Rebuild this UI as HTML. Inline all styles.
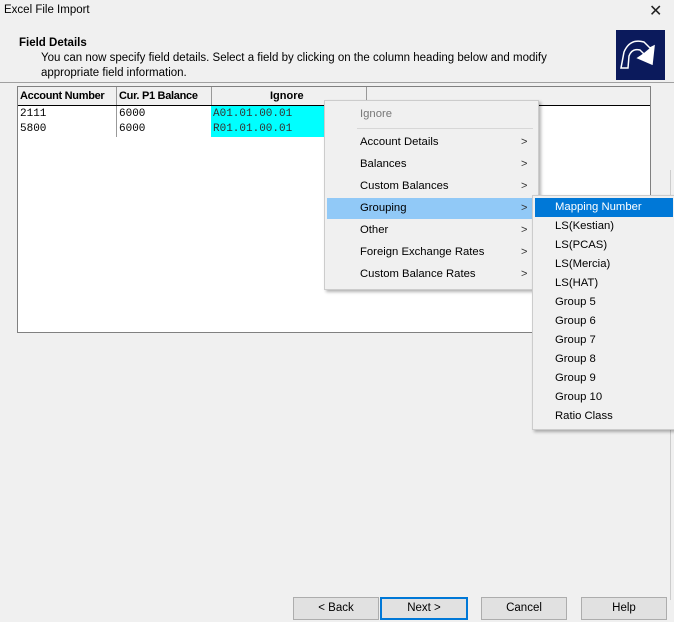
<!DOCTYPE html>
<html><head><style>
body{margin:0;width:674px;height:622px;background:#f0f0f0;font-family:"Liberation Sans",sans-serif;font-size:11.5px;color:#000;position:relative;overflow:hidden}
.a{position:absolute;white-space:nowrap}
.mono{font-family:"Liberation Mono",monospace;font-size:11px}
.mi{position:absolute;left:35px;font-size:11.3px}
.ar{position:absolute;left:196px;font-size:11px;color:#333}
.si{position:absolute;left:22px;font-size:11.3px}
.btn{position:absolute;top:597px;height:21px;border:1px solid #adadad;background:#e1e1e1;text-align:center;line-height:21px;font-size:11.5px}
</style></head><body>
<div class="a" style="left:4px;top:4px">Excel File Import</div>
<div class="a" style="left:649px;top:1px;font-size:16px;font-weight:300;color:#222">✕</div>
<div class="a" style="left:19px;top:37px;font-weight:bold">Field Details</div>
<div class="a" style="left:41px;top:52px">You can now specify field details. Select a field by clicking on the column heading below and modify</div>
<div class="a" style="left:41px;top:67px">appropriate field information.</div>
<div class="a" style="left:616px;top:30px;width:49px;height:50px;background:#0b1a5c">
<svg width="49" height="50" viewBox="0 0 49 50"><path d="M5 38 L8 22 Q14 8 28 12 L34 18 L38 16 L36 34 L22 28 L28 24 L24 20 Q16 18 13 26 L12 38 Z" fill="none" stroke="#fff" stroke-width="1.5"/><path d="M34 18 L38 16 L36 34 L22 28 Z" fill="#fff"/></svg></div>
<div class="a" style="left:0;top:82px;width:674px;height:1px;background:#a0a0a0"></div>
<div class="a" style="left:17px;top:86px;width:632px;height:245px;background:#fff;border:1px solid #808080"></div>
<div class="a" style="left:18px;top:87px;width:632px;height:18px;background:#f0f0f0;border-bottom:1px solid #000"></div>
<div class="a" style="left:116px;top:87px;width:1px;height:18px;background:#999"></div>
<div class="a" style="left:211px;top:87px;width:1px;height:18px;background:#999"></div>
<div class="a" style="left:366px;top:87px;width:1px;height:18px;background:#999"></div>
<div class="a" style="left:20px;top:90px;font-weight:bold;font-size:11px;letter-spacing:-0.3px">Account Number</div>
<div class="a" style="left:119px;top:90px;font-weight:bold;font-size:11px;letter-spacing:-0.3px">Cur. P1 Balance</div>
<div class="a" style="left:270px;top:90px;font-weight:bold;font-size:11px">Ignore</div>
<div class="a" style="left:116px;top:106px;width:1px;height:31px;background:#999"></div>
<div class="a" style="left:211px;top:106px;width:113px;height:31px;background:#00ffff"></div>
<div class="a mono" style="left:20px;top:108px">2111</div>
<div class="a mono" style="left:20px;top:123px">5800</div>
<div class="a mono" style="left:119px;top:108px">6000</div>
<div class="a mono" style="left:119px;top:123px">6000</div>
<div class="a mono" style="left:213px;top:108px;color:#333">A01.01.00.01</div>
<div class="a mono" style="left:213px;top:123px;color:#333">R01.01.00.01</div>
<div class="a" style="left:670px;top:170px;width:1px;height:430px;background:#ccc"></div>
<div class="a" style="left:324px;top:100px;width:213px;height:188px;background:#f0f0f0;border:1px solid #ccc;box-shadow:2px 2px 3px rgba(0,0,0,.3)">
<div class="mi" style="top:7px;color:#777">Ignore</div>
<div class="a" style="left:32px;top:27px;width:176px;height:1px;background:#d7d7d7"></div>
<div class="mi" style="top:35px">Account Details</div><div class="ar" style="top:35px">&gt;</div>
<div class="mi" style="top:57px">Balances</div><div class="ar" style="top:57px">&gt;</div>
<div class="mi" style="top:79px">Custom Balances</div><div class="ar" style="top:79px">&gt;</div>
<div class="a" style="left:2px;top:97px;width:208px;height:21px;background:#91c9f7"></div>
<div class="mi" style="top:101px">Grouping</div><div class="ar" style="top:101px">&gt;</div>
<div class="mi" style="top:123px">Other</div><div class="ar" style="top:123px">&gt;</div>
<div class="mi" style="top:145px">Foreign Exchange Rates</div><div class="ar" style="top:145px">&gt;</div>
<div class="mi" style="top:167px">Custom Balance Rates</div><div class="ar" style="top:167px">&gt;</div>
</div>
<div class="a" style="left:532px;top:195px;width:142px;height:233px;background:#f0f0f0;border:1px solid #ccc;box-shadow:2px 2px 3px rgba(0,0,0,.3)">
<div class="a" style="left:2px;top:2px;width:138px;height:19px;background:#0078d7"></div>
<div class="si" style="top:5px;color:#fff">Mapping Number</div>
<div class="si" style="top:24px">LS(Kestian)</div>
<div class="si" style="top:43px">LS(PCAS)</div>
<div class="si" style="top:62px">LS(Mercia)</div>
<div class="si" style="top:81px">LS(HAT)</div>
<div class="si" style="top:100px">Group 5</div>
<div class="si" style="top:119px">Group 6</div>
<div class="si" style="top:138px">Group 7</div>
<div class="si" style="top:157px">Group 8</div>
<div class="si" style="top:176px">Group 9</div>
<div class="si" style="top:195px">Group 10</div>
<div class="si" style="top:214px">Ratio Class</div>
</div>
<div class="btn" style="left:293px;width:84px">&lt; Back</div>
<div class="btn" style="left:380px;width:84px;border:2px solid #0078d7;height:19px;line-height:19px">Next &gt;</div>
<div class="btn" style="left:481px;width:84px">Cancel</div>
<div class="btn" style="left:581px;width:84px">Help</div>
</body></html>
